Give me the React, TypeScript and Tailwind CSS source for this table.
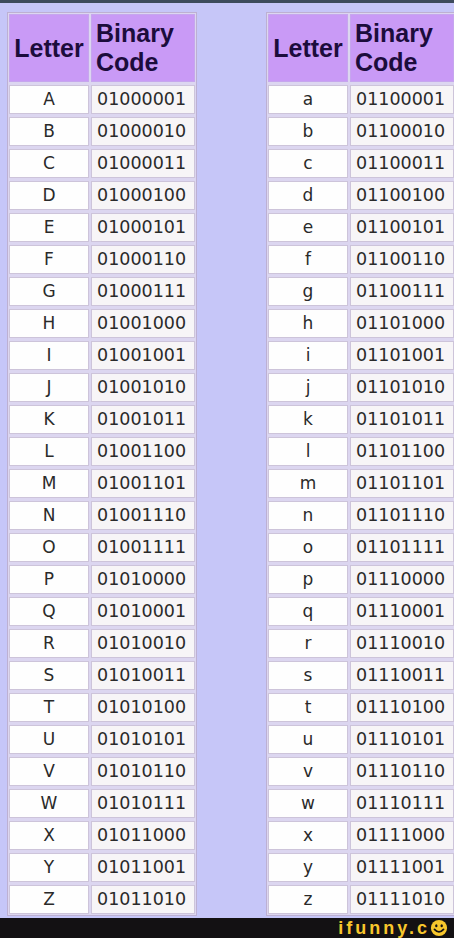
import React from "react";

const upper = "ABCDEFGHIJKLMNOPQRSTUVWXYZ".split("");
const lower = "abcdefghijklmnopqrstuvwxyz".split("");

function bin(ch: string) {
  return ch.charCodeAt(0).toString(2).padStart(8, "0");
}

function Table({ letters }: { letters: string[] }) {
  return (
    <div className="flex w-[190px] shrink-0 flex-col gap-[3px] border border-[#bdb0d2] bg-[#dcd6f0] p-px">
      <div className="grid h-[68px] grid-cols-[80px_104px] gap-[2px]">
        <div className="flex items-center justify-center border border-[#c6a6ee] bg-[#c99af6] text-[25px] font-bold leading-[30px] text-[#1c0c3c] [font-family:'Liberation_Sans',Arial,sans-serif]">
          Letter
        </div>
        <div className="flex flex-col justify-center border border-[#c6a6ee] bg-[#c99af6] pl-[4px] text-[25px] font-bold leading-[29px] text-[#1c0c3c] [font-family:'Liberation_Sans',Arial,sans-serif]">
          <span>Binary</span>
          <span>Code</span>
        </div>
      </div>
      {letters.map((l) => (
        <div key={l} className="grid h-[29px] grid-cols-[80px_104px] gap-[2px]">
          <div className="flex items-center justify-center border border-[#cdc4da] bg-[#fefefe] text-[17px] text-[#2a2a2a] [font-family:'DejaVu_Sans',Verdana,sans-serif]">
            {l}
          </div>
          <div className="flex items-center border border-[#cdc4da] bg-[#f7f5f7] pl-[5px] text-[17.5px] text-[#2a2a2a] [font-family:'DejaVu_Sans',Verdana,sans-serif]">
            {bin(l)}
          </div>
        </div>
      ))}
    </div>
  );
}

export default function App() {
  return (
    <div className="flex h-[938px] w-[454px] flex-col overflow-hidden bg-[#c6c6f8]">
      <div className="h-[3px] w-full shrink-0 bg-[#3d4b5c]" />
      <div className="flex h-[915px] shrink-0 items-start gap-[69px] overflow-hidden pl-[7px] pt-[9px]">
        <Table letters={upper} />
        <Table letters={lower} />
      </div>
      <div className="flex h-[20px] shrink-0 items-center justify-end bg-[#131113] pr-[6px]">
        <div className="flex items-center">
          <span className="text-[18px] font-bold leading-[18px] tracking-[3px] text-[#f8c72c] [font-family:'Liberation_Sans',Arial,sans-serif]">
            ifunny.c
          </span>
          <svg width="18" height="18" viewBox="0 0 20 20">
            <circle cx="10" cy="10" r="9" fill="#f8c72c" />
            <ellipse cx="7" cy="7.5" rx="1.3" ry="1.8" fill="#131113" />
            <ellipse cx="13" cy="7.5" rx="1.3" ry="1.8" fill="#131113" />
            <path d="M5 11.5 Q10 17 15 11.5" stroke="#131113" strokeWidth="2" fill="none" strokeLinecap="round" />
          </svg>
        </div>
      </div>
    </div>
  );
}
